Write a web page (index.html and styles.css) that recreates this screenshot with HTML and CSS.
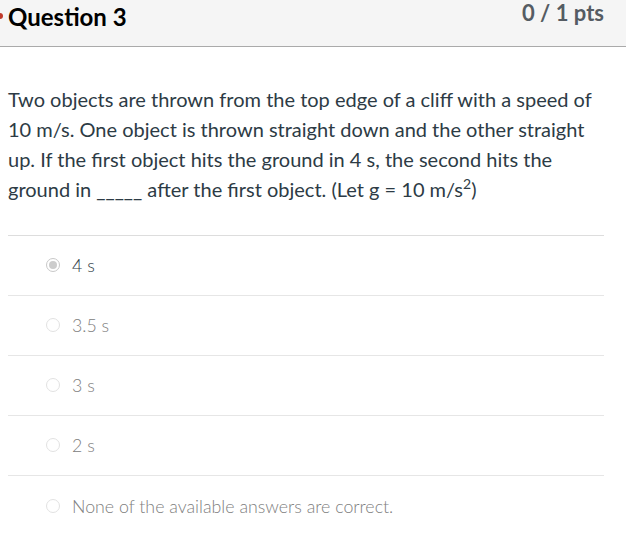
FILE: index.html
```html
<!DOCTYPE html>
<html>
<head>
<meta charset="utf-8">
<link rel="stylesheet" href="styles.css">
</head>
<body>
<div class="question">
  <div class="header">
    <span class="flag"></span>
    <h2 class="title">Question 3</h2>
    <span class="pts">0 / 1 pts</span>
  </div>
  <div class="body">
    <p class="text">Two objects are thrown from the top edge of a cliff with a speed of 10 m/s. One object is thrown straight down and the other straight up. If the first object hits the ground in 4 s, the second hits the ground in _____ after the first object. (Let g = 10 m/s<sup>2</sup>)</p>
    <div class="answers">
      <div class="answer selected"><span class="radio"></span><span class="label">4 s</span></div>
      <div class="answer"><span class="radio"></span><span class="label">3.5 s</span></div>
      <div class="answer"><span class="radio"></span><span class="label">3 s</span></div>
      <div class="answer"><span class="radio"></span><span class="label">2 s</span></div>
      <div class="answer"><span class="radio"></span><span class="label">None of the available answers are correct.</span></div>
    </div>
  </div>
</div>
</body>
</html>
```
FILE: styles.css
```css
html, body {
  margin: 0;
  padding: 0;
  background: #fff;
}
body {
  font-family: Lato, "Open Sans", sans-serif;
  color: #2d3b45;
  width: 626px;
  height: 560px;
  overflow: hidden;
}
.header {
  position: relative;
  height: 46px;
  background: #f5f5f5;
  border-bottom: 1px solid #aaaaaa;
  display: flex;
  justify-content: space-between;
  align-items: flex-start;
  padding: 0 22px 0 8px;
}
.flag {
  position: absolute;
  left: -3px;
  top: 13px;
  width: 6px;
  height: 6px;
  border-radius: 50%;
  background: #c03a2b;
}
.title {
  margin: 0;
  font-size: 24px;
  font-weight: 700;
  line-height: 28px;
  padding-top: 3px;
  color: #000;
}
.pts {
  font-size: 22px;
  font-weight: 700;
  color: #555c63;
  line-height: 26px;
  padding-top: 0;
}
.body {
  padding: 0 22px 0 8px;
}
.text {
  margin: 37px 0 31px;
  font-size: 20px;
  line-height: 30px;
  color: #2d3b45;
}
.text sup {
  font-size: 14px;
  line-height: 0;
  vertical-align: 8px;
}
.answers {
  border-top: 1px solid #dddddd;
}
.answer {
  height: 59px;
  display: flex;
  align-items: center;
  border-bottom: 1px solid #e6e6e6;
  font-size: 17.8px;
  font-weight: 300;
  color: #808080;
  padding-bottom: 1px;
  box-sizing: border-box;
  height: 60px;
}
.answer:last-child {
  border-bottom: none;
}
.radio {
  width: 14px;
  height: 14px;
  border: 1px solid #e2e2e2;
  border-radius: 50%;
  margin-left: 38px;
  margin-right: 12px;
  box-sizing: border-box;
  background: #fff;
  display: flex;
  align-items: center;
  justify-content: center;
}
.selected .radio {
  border: 1px solid #c8c8c8;
}
.selected .radio::after {
  content: "";
  width: 8px;
  height: 8px;
  border-radius: 50%;
  background: #cccccc;
}
.selected {
  color: #2d3b45;
}
```
